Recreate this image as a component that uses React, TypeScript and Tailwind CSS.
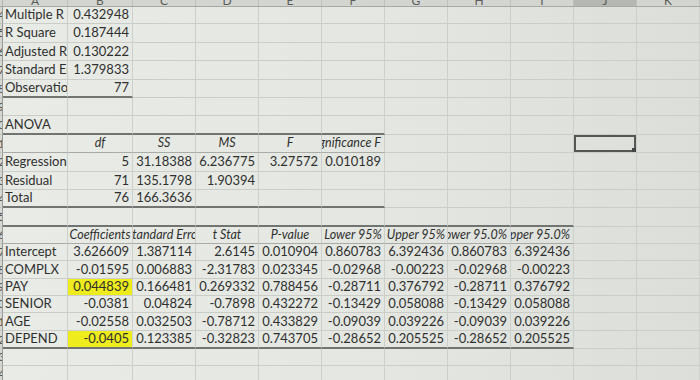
import React from 'react';

type CellSpec = string | { t: string; a?: 'l' | 'r' | 'c'; i?: boolean; hl?: boolean };

type Row = {
  n: number;
  h: string;
  cells: CellSpec[];
  dark?: number;
  thin?: number;
  hdr?: boolean;
  sel?: number;
};

const letters = ['A', 'B', 'C', 'D', 'E', 'F', 'G', 'H', 'I', 'J', 'K'];

const rows: Row[] = [
  { n: 4, h: 'h-[17px]', cells: ['Multiple R', '0.432948'] },
  { n: 5, h: 'h-[19px]', cells: ['R Square', '0.187444'] },
  { n: 6, h: 'h-[18px]', cells: ['Adjusted R Square', '0.130222'] },
  { n: 7, h: 'h-[19px]', cells: ['Standard Error', '1.379833'] },
  { n: 8, h: 'h-[18px]', cells: ['Observations', '77'], dark: 2 },
  { n: 9, h: 'h-[18px]', cells: [] },
  { n: 10, h: 'h-[19px]', cells: ['ANOVA'], dark: 6 },
  {
    n: 11,
    h: 'h-[18px]',
    hdr: true,
    thin: 6,
    sel: 9,
    cells: ['', 'df', 'SS', 'MS', 'F', { t: 'Significance F', a: 'r' }],
  },
  { n: 12, h: 'h-[19px]', cells: ['Regression', '5', '31.18388', '6.236775', '3.27572', '0.010189'] },
  { n: 13, h: 'h-[18px]', cells: ['Residual', '71', '135.1798', '1.90394'] },
  { n: 14, h: 'h-[18px]', cells: ['Total', '76', '166.3636'], dark: 6 },
  { n: 15, h: 'h-[19px]', cells: [], dark: 9 },
  {
    n: 16,
    h: 'h-[17px]',
    hdr: true,
    thin: 9,
    cells: [
      '',
      'Coefficients',
      'Standard Error',
      't Stat',
      'P-value',
      'Lower 95%',
      'Upper 95%',
      { t: 'Lower 95.0%', a: 'r' },
      { t: 'Upper 95.0%', a: 'r' },
    ],
  },
  {
    n: 17,
    h: 'h-[17px]',
    cells: ['Intercept', '3.626609', '1.387114', '2.6145', '0.010904', '0.860783', '6.392436', '0.860783', '6.392436'],
  },
  {
    n: 18,
    h: 'h-[18px]',
    cells: ['COMPLX', '-0.01595', '0.006883', '-2.31783', '0.023345', '-0.02968', '-0.00223', '-0.02968', '-0.00223'],
  },
  {
    n: 19,
    h: 'h-[17px]',
    cells: ['PAY', { t: '0.044839', hl: true }, '0.166481', '0.269332', '0.788456', '-0.28711', '0.376792', '-0.28711', '0.376792'],
  },
  {
    n: 20,
    h: 'h-[17px]',
    cells: ['SENIOR', '-0.0381', '0.04824', '-0.7898', '0.432272', '-0.13429', '0.058088', '-0.13429', '0.058088'],
  },
  {
    n: 21,
    h: 'h-[18px]',
    cells: ['AGE', '-0.02558', '0.032503', '-0.78712', '0.433829', '-0.09039', '0.039226', '-0.09039', '0.039226'],
  },
  {
    n: 22,
    h: 'h-[18px]',
    dark: 9,
    cells: ['DEPEND', { t: '-0.0405', hl: true }, '0.123385', '-0.32823', '0.743705', '-0.28652', '0.205525', '-0.28652', '0.205525'],
  },
  { n: 23, h: 'h-[17px]', cells: [] },
  { n: 24, h: 'h-[17px]', cells: [] },
];

const gridCols = 'grid grid-cols-[24px_65px_65px_repeat(9,63px)]';

function SheetCell({ spec, idx, row }: { spec?: CellSpec; idx: number; row: Row }) {
  const cell = typeof spec === 'string' ? { t: spec } : spec ?? { t: '' };
  const numeric = /^-?[\d.]+$/.test(cell.t);
  const align = cell.a ?? (row.hdr ? 'c' : numeric ? 'r' : 'l');
  const justify = align === 'r' ? 'justify-end' : align === 'c' ? 'justify-center' : 'justify-start';

  let bottom = 'border-b border-b-[#cbcdc9]';
  if (row.dark && idx < row.dark) bottom = 'border-b-2 border-b-[#727471]';
  else if (row.thin && idx < row.thin) bottom = 'border-b border-b-[#a9aba7]';

  return (
    <div
      className={`relative flex items-center overflow-hidden whitespace-nowrap border-r border-r-[#cdcfcb] ${bottom} ${justify} ${
        align === 'r' ? 'pr-[3px]' : align === 'l' ? 'pl-[2px]' : ''
      } ${cell.hl ? 'bg-[#eeec1c]' : ''} ${row.hdr ? 'text-[12.5px] italic' : ''}`}
    >
      <span className="shrink-0">{cell.t}</span>
      {row.sel === idx && (
        <span className="absolute inset-0 border-2 border-[#555754]">
          <span className="absolute -bottom-[3px] -right-[3px] h-[5px] w-[5px] bg-[#444]" />
        </span>
      )}
    </div>
  );
}

export default function App() {
  return (
    <div className="h-[380px] w-[700px] overflow-hidden bg-gradient-to-r from-[#e9ebe7] via-[#e5e7e3] to-[#dcdeda] font-[family-name:Lato,'Liberation_Sans',sans-serif] text-[13px] text-[#2f302e]">
      <div className="-ml-[21px] w-[721px]">
        {/* column letters, mostly scrolled off the top */}
        <div className={`${gridCols} h-[7px] border-b border-[#a7a9a5] bg-[#d3d5d1]`}>
          <div className="border-r border-[#b3b5b1]" />
          {letters.map((l) => (
            <div
              key={l}
              className={`flex items-end justify-center overflow-hidden border-r border-[#bfc1bd] text-[12px] text-[#5a5c59] ${
                l === 'J' ? 'bg-[#b5b7b3]' : ''
              }`}
            >
              <span className="shrink-0 leading-[10px]">{l}</span>
            </div>
          ))}
        </div>

        {rows.map((row) => (
          <div key={row.n} className={`${gridCols} ${row.h}`}>
            <div className="flex items-center justify-end overflow-hidden border-b border-r border-b-[#c3c5c1] border-r-[#989a97] bg-[#d6d8d4] text-[12px] text-[#555]">
              <span className="shrink-0 -mr-[3px]">{row.n}</span>
            </div>
            {letters.map((l, idx) => (
              <SheetCell key={l} spec={row.cells[idx]} idx={idx} row={row} />
            ))}
          </div>
        ))}
      </div>
    </div>
  );
}
